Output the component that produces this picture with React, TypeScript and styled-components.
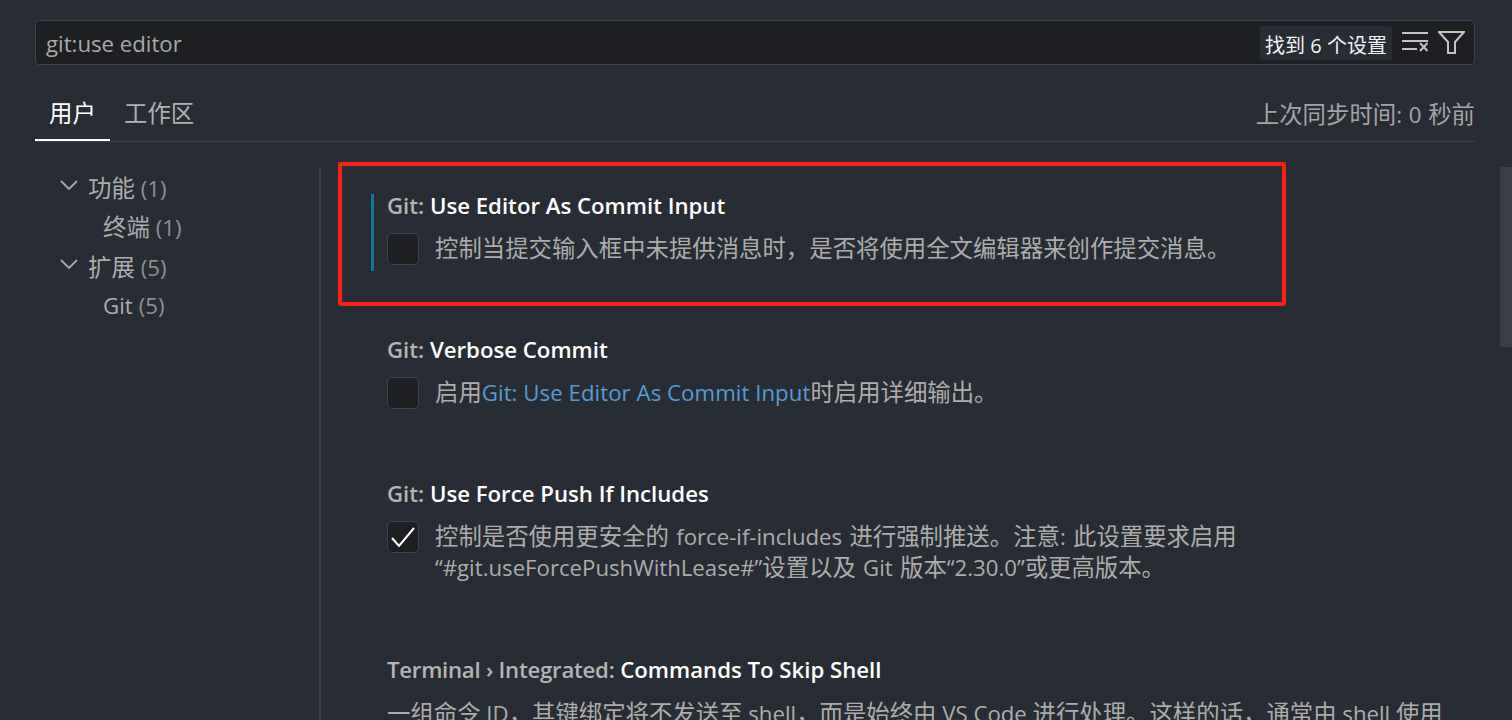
import styled, { createGlobalStyle } from 'styled-components';

const GlobalStyle = createGlobalStyle`
  html, body {
    margin: 0;
    height: 100%;
    background: #282c34;
    overflow: hidden;
  }
  * {
    box-sizing: border-box;
  }
`;

const FONT = '"Open Sans", "Noto Sans CJK SC", sans-serif';

const Page = styled.div`
  width: 1512px;
  height: 720px;
  overflow: hidden;
  position: relative;
  padding: 20px 37px 0 35px;
  background: #282c34;
  color: #b4b4b4;
  font-family: ${FONT};
  font-size: 22.2px;
`;

// CJK runs sit a little larger than the latin text around them
const Han = styled.span`
  font-size: 23.4px;
`;

const SearchBar = styled.div`
  height: 45px;
  display: flex;
  align-items: center;
  padding: 0 9px 0 10px;
  background: #1d1f23;
  border: 1px solid #3c4150;
  border-radius: 4px;
`;

const SearchText = styled.span`
  flex: 1;
  color: #a9a9a9;
  line-height: 45px;
  padding-top: 1px;
`;

const CountBadge = styled.span`
  width: 132px;
  height: 34px;
  display: flex;
  align-items: center;
  justify-content: center;
  margin-top: 1px;
  padding-top: 2px;
  background: #282c34;
  border-radius: 3px;
  color: #f2f2f2;
  font-size: 20px;
  white-space: nowrap;
`;

const SearchIcon = styled.svg`
  display: block;
  margin-left: 10px;
  flex: none;
`;

const TabBar = styled.div`
  height: 58px;
  margin-top: 19px;
  display: flex;
  align-items: stretch;
  border-bottom: 1px solid #3c4150;
`;

const Tab = styled.div<{ $active?: boolean }>`
  width: ${({ $active }) => ($active ? '75px' : '90px')};
  padding-left: 14px;
  display: flex;
  align-items: center;
  color: ${({ $active }) => ($active ? '#ffffff' : '#b0b0b0')};
  border-bottom: 2px solid ${({ $active }) => ($active ? '#ffffff' : 'transparent')};
  font-size: 23.4px;
  white-space: nowrap;
`;

const SyncStatus = styled.div`
  margin-left: auto;
  display: flex;
  align-items: center;
  word-spacing: 1px;
  color: #a4a4a4;
  white-space: nowrap;
`;

const Body = styled.div`
  display: flex;
  margin-top: 25px;
`;

const Sidebar = styled.nav`
  width: 286px;
  height: 560px;
  flex: none;
  padding-left: 25px;
  border-right: 2px solid #3c4150;
`;

const TreeRow = styled.div<{ $child?: boolean }>`
  height: 39.6px;
  display: flex;
  align-items: center;
  padding-left: ${({ $child }) => ($child ? '43px' : '0')};
  gap: 10px;
  color: #adadad;
  white-space: nowrap;
`;

const Count = styled.span`
  color: #8f8f8f;
  margin-left: 6px;
`;

const Chevron = styled.svg`
  display: block;
  flex: none;
  margin-top: -3px;
`;

const SettingsList = styled.div`
  flex: 1;
  margin-left: 17px;
  margin-top: -5px;
`;

const SettingCard = styled.section<{ $outlined?: boolean; $height: number }>`
  width: 948px;
  height: ${({ $height }) => $height}px;
  padding: 28px 0 0 29px;
  border: 4px solid ${({ $outlined }) => ($outlined ? '#fc2014' : 'transparent')};
  border-radius: 3px;
`;

const Row = styled.div<{ $marked?: boolean }>`
  padding-left: 13px;
  border-left: 3px solid ${({ $marked }) => ($marked ? '#12789b' : 'transparent')};
  height: 77px;
`;

const Title = styled.div`
  height: 24px;
  line-height: 24px;
  font-weight: 600;
  color: #b4b4b4;
  white-space: nowrap;
`;

const TitleScope = styled.span<{ $tight?: boolean }>`
  letter-spacing: ${({ $tight }) => ($tight ? '-0.25px' : '0')};
`;

const TitleName = styled.span`
  color: #ffffff;
`;

const Control = styled.div`
  display: flex;
  align-items: flex-start;
  gap: 16px;
  margin-top: 15px;
`;

const Checkbox = styled.span`
  width: 32px;
  height: 32px;
  flex: none;
  display: flex;
  align-items: center;
  justify-content: center;
  background: #1d1f23;
  border: 1px solid #3c4150;
  border-radius: 5px;
`;

const Description = styled.div`
  margin-top: 0;
  line-height: 31px;
  word-spacing: 1.5px;
  color: #acacac;
  white-space: nowrap;
`;

const SettingLink = styled.a`
  color: #539bd6;
  word-spacing: 0;
  letter-spacing: 0.06px;
`;

const PlainDescription = styled.div`
  margin-top: 15px;
  line-height: 32px;
  color: #acacac;
  white-space: nowrap;
`;

const ScrollThumb = styled.div`
  position: absolute;
  top: 167px;
  right: 0;
  width: 12px;
  height: 180px;
  background: #3a3e49;
`;

function ChevronDown() {
  return (
    <Chevron width="18" height="11" viewBox="0 0 18 11" fill="none">
      <path d="M1 1l8 8 8-8" stroke="#a8a8a8" strokeWidth="1.8" />
    </Chevron>
  );
}

function SettingTitle({ scope, name, tight }: { scope: string; name: string; tight?: boolean }) {
  return (
    <Title>
      <TitleScope $tight={tight}>{scope}</TitleScope> <TitleName>{name}</TitleName>
    </Title>
  );
}

export default function App() {
  return (
    <Page>
      <GlobalStyle />
      <SearchBar>
        <SearchText>git:use editor</SearchText>
        <CountBadge>找到 6 个设置</CountBadge>
        <SearchIcon width="26" height="21" viewBox="0 0 26 21" fill="none" stroke="#c4c4c4" strokeWidth="2">
          <path d="M0 1h26M0 9h26M0 17h15" />
          <path d="M18 11l7.5 8M25.5 11L18 19" />
        </SearchIcon>
        <SearchIcon width="27" height="23" viewBox="0 0 27 23" fill="none" stroke="#c4c4c4" strokeWidth="2">
          <path d="M1 1h25L17 11v11h-7V11z" />
        </SearchIcon>
      </SearchBar>

      <TabBar>
        <Tab $active>用户</Tab>
        <Tab>工作区</Tab>
        <SyncStatus>
          <span>
            <Han>上次同步时间</Han>: 0 <Han>秒前</Han>
          </span>
        </SyncStatus>
      </TabBar>

      <Body>
        <Sidebar>
          <TreeRow>
            <ChevronDown />
            <span>
              <Han>功能</Han>
              <Count>(1)</Count>
            </span>
          </TreeRow>
          <TreeRow $child>
            <span>
              <Han>终端</Han>
              <Count>(1)</Count>
            </span>
          </TreeRow>
          <TreeRow>
            <ChevronDown />
            <span>
              <Han>扩展</Han>
              <Count>(5)</Count>
            </span>
          </TreeRow>
          <TreeRow $child>
            <span>
              Git
              <Count>(5)</Count>
            </span>
          </TreeRow>
        </Sidebar>

        <SettingsList>
          <SettingCard $outlined $height={144}>
            <Row $marked>
              <SettingTitle scope="Git:" name="Use Editor As Commit Input" />
              <Control>
                <Checkbox />
                <Description>
                  <Han>控制当提交输入框中未提供消息时，是否将使用全文编辑器来创作提交消息。</Han>
                </Description>
              </Control>
            </Row>
          </SettingCard>

          <SettingCard $height={144}>
            <Row>
              <SettingTitle scope="Git:" name="Verbose Commit" />
              <Control>
                <Checkbox />
                <Description>
                  <Han>启用</Han>
                  <SettingLink>Git: Use Editor As Commit Input</SettingLink>
                  <Han>时启用详细输出。</Han>
                </Description>
              </Control>
            </Row>
          </SettingCard>

          <SettingCard $height={176}>
            <Row>
              <SettingTitle scope="Git:" name="Use Force Push If Includes" />
              <Control>
                <Checkbox>
                  <svg width="26" height="22" viewBox="0 0 26 22" fill="none">
                    <path d="M2 12l7 8L24 2" stroke="#ffffff" strokeWidth="2" />
                  </svg>
                </Checkbox>
                <Description>
                  <Han>控制是否使用更安全的</Han> force-if-includes <Han>进行强制推送。注意</Han>: <Han>此设置要求启用</Han>
                  <br />
                  “#git.useForcePushWithLease#”<Han>设置以及</Han> Git <Han>版本</Han>“2.30.0”<Han>或更高版本。</Han>
                </Description>
              </Control>
            </Row>
          </SettingCard>

          <SettingCard $height={180}>
            <Row>
              <SettingTitle tight scope="Terminal › Integrated:" name="Commands To Skip Shell" />
              <PlainDescription>
                <Han>一组命令</Han> ID<Han>，其键绑定将不发送至</Han> shell<Han>，而是始终由</Han> VS Code <Han>进行处理。这样的话，通常由</Han> shell <Han>使用</Han>
              </PlainDescription>
            </Row>
          </SettingCard>
        </SettingsList>
      </Body>
      <ScrollThumb />
    </Page>
  );
}
